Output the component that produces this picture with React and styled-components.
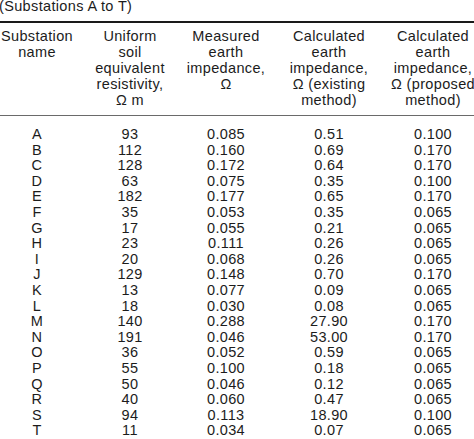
import React from "react";
import styled, { createGlobalStyle } from "styled-components";

const GlobalStyle = createGlobalStyle`
  html, body {
    margin: 0;
    padding: 0;
    background: #ffffff;
    overflow: hidden;
  }
  body {
    font-family: "Liberation Sans", Arial, sans-serif;
    color: #1c1c1c;
  }
`;

const Page = styled.div`
  width: 474px;
  height: 439px;
  overflow: hidden;
`;

const Caption = styled.div`
  font-size: 14.5px;
  letter-spacing: 0.35px;
  line-height: 16px;
  margin-top: -2px;
  margin-left: -1px;
  height: 23px;
  white-space: nowrap;
`;

const Table = styled.div`
  border-top: 2.5px solid #1a1a1a;
`;

const Row = styled.div`
  display: grid;
  grid-template-columns: 74px 112px 80px 126px 82px;
  font-size: 14.5px;
  letter-spacing: 0.35px;
  line-height: ${(p) => (p.$head ? "16px" : "15.6px")};
`;

const Head = styled(Row)`
  padding: 5px 0 7px;
  border-bottom: 1.5px solid #6a6a6a;
`;

const Body = styled.div`
  padding-top: 11px;
`;

const Cell = styled.div`
  text-align: center;
  white-space: nowrap;
  display: flex;
  justify-content: center;
`;

const headers = [
  ["Substation", "name"],
  ["Uniform", "soil", "equivalent", "resistivity,", "Ω m"],
  ["Measured", "earth", "impedance,", "Ω"],
  ["Calculated", "earth", "impedance,", "Ω (existing", "method)"],
  ["Calculated", "earth", "impedance,", "Ω (proposed", "method)"],
];

const rows = [
  ["A", "93", "0.085", "0.51", "0.100"],
  ["B", "112", "0.160", "0.69", "0.170"],
  ["C", "128", "0.172", "0.64", "0.170"],
  ["D", "63", "0.075", "0.35", "0.100"],
  ["E", "182", "0.177", "0.65", "0.170"],
  ["F", "35", "0.053", "0.35", "0.065"],
  ["G", "17", "0.055", "0.21", "0.065"],
  ["H", "23", "0.111", "0.26", "0.065"],
  ["I", "20", "0.068", "0.26", "0.065"],
  ["J", "129", "0.148", "0.70", "0.170"],
  ["K", "13", "0.077", "0.09", "0.065"],
  ["L", "18", "0.030", "0.08", "0.065"],
  ["M", "140", "0.288", "27.90", "0.170"],
  ["N", "191", "0.046", "53.00", "0.170"],
  ["O", "36", "0.052", "0.59", "0.065"],
  ["P", "55", "0.100", "0.18", "0.065"],
  ["Q", "50", "0.046", "0.12", "0.065"],
  ["R", "40", "0.060", "0.47", "0.065"],
  ["S", "94", "0.113", "18.90", "0.100"],
  ["T", "11", "0.034", "0.07", "0.065"],
];

export default function App() {
  return (
    <Page>
      <GlobalStyle />
      <Caption>(Substations A to T)</Caption>
      <Table>
        <Head $head>
          {headers.map((lines, i) => (
            <Cell key={i}>
              <div>
                {lines.map((l, j) => (
                  <div key={j}>{l}</div>
                ))}
              </div>
            </Cell>
          ))}
        </Head>
        <Body>
          {rows.map((r) => (
            <Row key={r[0]}>
              {r.map((v, i) => (
                <Cell key={i}>{v}</Cell>
              ))}
            </Row>
          ))}
        </Body>
      </Table>
    </Page>
  );
}
